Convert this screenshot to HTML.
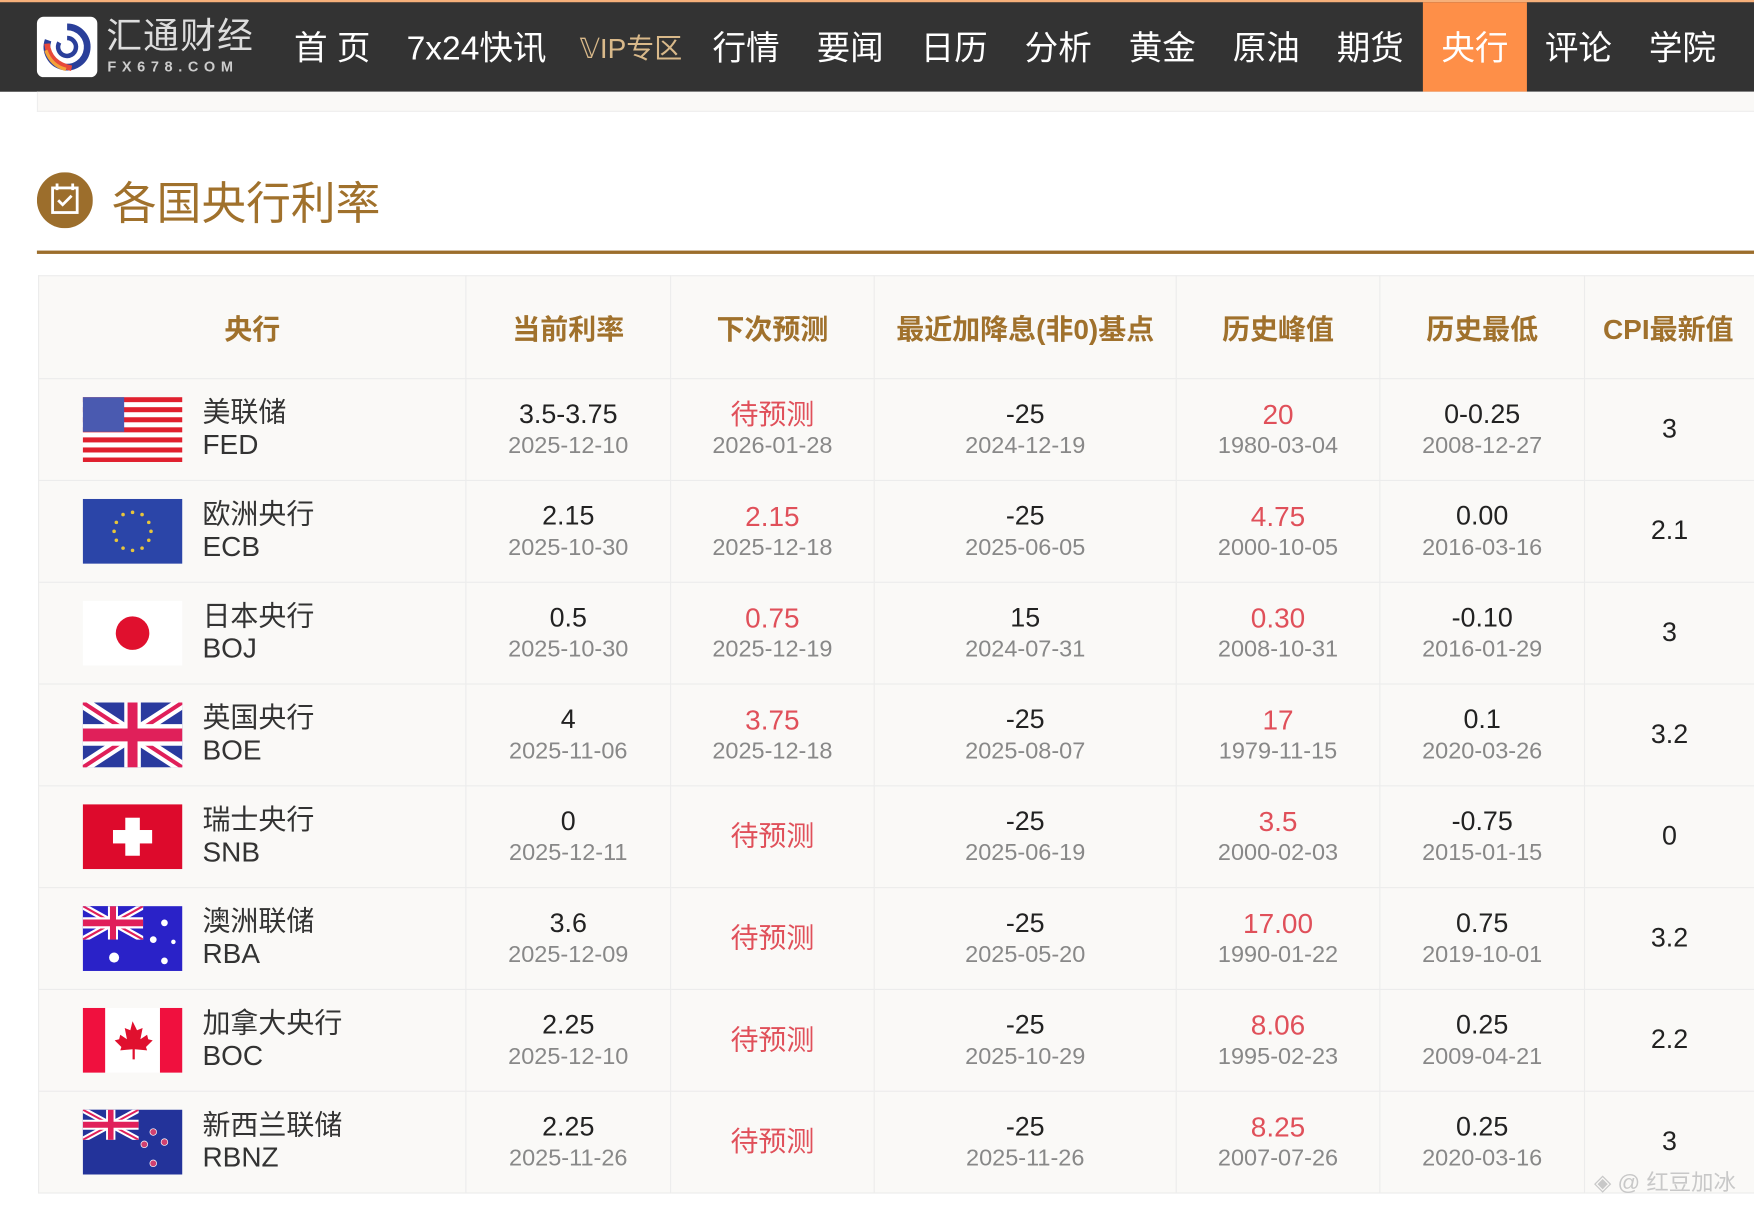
<!DOCTYPE html>
<html><head><meta charset="utf-8">
<style>
html,body{margin:0;padding:0;background:#fff;overflow:hidden;width:1754px;height:1206px}
#w{position:absolute;left:0;top:0;width:1568px;height:1078px;transform:scale(1.11862);transform-origin:0 0;font-family:"Liberation Sans","Noto Sans CJK SC",sans-serif}
.nav{position:absolute;left:0;top:0;width:1568px;height:82px;background:#333;border-top:2px solid #f6b07a;box-sizing:border-box}
.ni{position:absolute;top:2px;height:80px;line-height:80px;color:#fff;font-size:30px;text-align:center;white-space:nowrap}
.sub{position:absolute;left:33px;top:82px;width:1540px;height:17px;background:#faf9f7;border-bottom:1px solid #eee;border-left:1px solid #eee}
.title{position:absolute;left:100px;top:155px;font-size:40px;color:#a0712c;line-height:56px}
.hl{position:absolute;left:33px;top:224px;width:1540px;height:3px;background:#9c6e2c}
table{position:absolute;left:34px;top:246px;border-collapse:collapse;background:#faf9f7;table-layout:fixed;width:1580px}
td,th{border:1px solid #ececec;text-align:center;padding:0;height:90px}
th{color:#a0712c;font-size:25px;font-weight:bold;height:91px}
.v{font-size:24px;color:#222;line-height:28px}
.d{font-size:21px;color:#888;line-height:27px}
.r{color:#e0505a}
td>.r:only-child,.v.r{font-size:25px}
.bk{text-align:left;position:relative}
.bk svg{position:absolute;left:39px;top:16px}
.nm{position:absolute;left:146px;top:16px;font-size:25px;color:#333;line-height:29px}
</style></head><body><div id="w">
<div class="nav">
 <div style="position:absolute;left:33px;top:13px;width:54px;height:54px;background:#fff;border-radius:6px">
  <svg width="54" height="54" viewBox="0 0 54 54"><path d="M27 9a18 18 0 1 1-17 12" fill="none" stroke="#2a3f9a" stroke-width="6"/><path d="M27 19a8 8 0 1 1-7 4" fill="none" stroke="#2a3f9a" stroke-width="4"/><path d="M9 24q2 18 22 22" fill="none" stroke="#e8483a" stroke-width="5"/><path d="M8 30q5 14 18 17" fill="none" stroke="#f3a13a" stroke-width="3"/></svg>
 </div>
 <div style="position:absolute;left:95px;top:12px;color:#ddd;font-size:32px;line-height:36px;letter-spacing:1px">汇通财经</div>
 <div style="position:absolute;left:96px;top:50px;color:#ccc;font-size:13px;letter-spacing:5px;font-weight:bold">FX678.COM</div>
 <div class="ni" style="left:262px;width:70px">首 页</div>
 <div class="ni" style="left:362px;width:128px">7x24快讯</div>
 <div class="ni" style="left:513px;width:102px;color:#d9b98a;font-size:25px">𝕍IP专区</div>
 <div class="ni" style="left:637px;width:60px">行情</div>
 <div class="ni" style="left:730px;width:60px">要闻</div>
 <div class="ni" style="left:823px;width:60px">日历</div>
 <div class="ni" style="left:916px;width:60px">分析</div>
 <div class="ni" style="left:1009px;width:60px">黄金</div>
 <div class="ni" style="left:1102px;width:60px">原油</div>
 <div class="ni" style="left:1195px;width:60px">期货</div>
 <div class="ni" style="left:1272px;width:93px;top:0;height:80px;background:#fe8f48;line-height:84px">央行</div>
 <div class="ni" style="left:1381px;width:60px">评论</div>
 <div class="ni" style="left:1474px;width:60px">学院</div>
</div>
<div class="sub"></div>
<svg style="position:absolute;left:33px;top:154px" width="50" height="50" viewBox="0 0 50 50"><circle cx="25" cy="25" r="25" fill="#9c6e2c"/><rect x="14" y="14" width="22" height="22" fill="none" stroke="#fff" stroke-width="2.5"/><path d="M18 10v6M32 10v6" stroke="#fff" stroke-width="2.5"/><path d="M19 25l4 4 8-8" fill="none" stroke="#fff" stroke-width="2.5"/></svg>
<div class="title">各国央行利率</div>
<div class="hl"></div>
<table>
<colgroup><col style="width:382px"><col style="width:183px"><col style="width:182px"><col style="width:270px"><col style="width:182px"><col style="width:183px"><col style="width:152px"><col></colgroup>
<tr><th>央行</th><th>当前利率</th><th>下次预测</th><th>最近加降息(非0)基点</th><th>历史峰值</th><th>历史最低</th><th style="text-align:left;padding-left:16px">CPI最新值</th><th style="border-right:none"></th></tr>
<tr><td class="bk"><svg width="89" height="58" viewBox="0 0 89 58"><rect width="89" height="58" fill="#fff"/><g fill="#e0202e"><rect y="0" width="89" height="4.5"/><rect y="9" width="89" height="4.5"/><rect y="18" width="89" height="4.5"/><rect y="27" width="89" height="4.5"/><rect y="36" width="89" height="4.5"/><rect y="45" width="89" height="4.5"/><rect y="54" width="89" height="4"/></g><rect width="37" height="31" fill="#4a5ab0"/></svg><div class="nm">美联储<br>FED</div></td>
<td><div class="v">3.5-3.75</div><div class="d">2025-12-10</div></td><td><div class="v r">待预测</div><div class="d">2026-01-28</div></td><td><div class="v">-25</div><div class="d">2024-12-19</div></td><td><div class="v r">20</div><div class="d">1980-03-04</div></td><td><div class="v">0-0.25</div><div class="d">2008-12-27</div></td><td class="v">3</td><td></td></tr>
<tr><td class="bk"><svg width="89" height="58" viewBox="0 0 89 58"><rect width="89" height="58" fill="#2b45a8"/><g fill="#e8c53a"><circle cx="44.5" cy="12" r="1.6"/><circle cx="53" cy="14" r="1.6"/><circle cx="59" cy="21" r="1.6"/><circle cx="61" cy="29" r="1.6"/><circle cx="59" cy="37" r="1.6"/><circle cx="53" cy="44" r="1.6"/><circle cx="44.5" cy="46" r="1.6"/><circle cx="36" cy="44" r="1.6"/><circle cx="30" cy="37" r="1.6"/><circle cx="28" cy="29" r="1.6"/><circle cx="30" cy="21" r="1.6"/><circle cx="36" cy="14" r="1.6"/></g></svg><div class="nm">欧洲央行<br>ECB</div></td>
<td><div class="v">2.15</div><div class="d">2025-10-30</div></td><td><div class="v r">2.15</div><div class="d">2025-12-18</div></td><td><div class="v">-25</div><div class="d">2025-06-05</div></td><td><div class="v r">4.75</div><div class="d">2000-10-05</div></td><td><div class="v">0.00</div><div class="d">2016-03-16</div></td><td class="v">2.1</td><td></td></tr>
<tr><td class="bk"><svg width="89" height="58" viewBox="0 0 89 58"><rect width="89" height="58" fill="#fff"/><circle cx="44.5" cy="29" r="15" fill="#e0102e"/></svg><div class="nm">日本央行<br>BOJ</div></td>
<td><div class="v">0.5</div><div class="d">2025-10-30</div></td><td><div class="v r">0.75</div><div class="d">2025-12-19</div></td><td><div class="v">15</div><div class="d">2024-07-31</div></td><td><div class="v r">0.30</div><div class="d">2008-10-31</div></td><td><div class="v">-0.10</div><div class="d">2016-01-29</div></td><td class="v">3</td><td></td></tr>
<tr><td class="bk"><svg width="89" height="58" viewBox="0 0 60 30" preserveAspectRatio="none"><rect width="60" height="30" fill="#2a3a9e"/><path d="M0,0L60,30M60,0L0,30" stroke="#fff" stroke-width="6"/><path d="M0,0L60,30M60,0L0,30" stroke="#e0205a" stroke-width="2"/><path d="M30,0V30M0,15H60" stroke="#fff" stroke-width="10"/><path d="M30,0V30M0,15H60" stroke="#e0205a" stroke-width="6"/></svg><div class="nm">英国央行<br>BOE</div></td>
<td><div class="v">4</div><div class="d">2025-11-06</div></td><td><div class="v r">3.75</div><div class="d">2025-12-18</div></td><td><div class="v">-25</div><div class="d">2025-08-07</div></td><td><div class="v r">17</div><div class="d">1979-11-15</div></td><td><div class="v">0.1</div><div class="d">2020-03-26</div></td><td class="v">3.2</td><td></td></tr>
<tr><td class="bk"><svg width="89" height="58" viewBox="0 0 89 58"><rect width="89" height="58" fill="#dd0a2c"/><rect x="38" y="12" width="13" height="34" fill="#fff"/><rect x="27" y="23" width="35" height="12" fill="#fff"/></svg><div class="nm">瑞士央行<br>SNB</div></td>
<td><div class="v">0</div><div class="d">2025-12-11</div></td><td><div class="v r">待预测</div></td><td><div class="v">-25</div><div class="d">2025-06-19</div></td><td><div class="v r">3.5</div><div class="d">2000-02-03</div></td><td><div class="v">-0.75</div><div class="d">2015-01-15</div></td><td class="v">0</td><td></td></tr>
<tr><td class="bk"><svg width="89" height="58" viewBox="0 0 89 58"><rect width="89" height="58" fill="#2a22c8"/><svg width="54" height="30" viewBox="0 0 60 30" preserveAspectRatio="none"><rect width="60" height="30" fill="#2a22c8"/><path d="M0,0L60,30M60,0L0,30" stroke="#fff" stroke-width="6"/><path d="M0,0L60,30M60,0L0,30" stroke="#e0205a" stroke-width="2"/><path d="M30,0V30M0,15H60" stroke="#fff" stroke-width="10"/><path d="M30,0V30M0,15H60" stroke="#e0205a" stroke-width="6"/></svg><g fill="#fff"><circle cx="28" cy="46" r="4.5"/><circle cx="73" cy="15" r="3"/><circle cx="63" cy="30" r="3"/><circle cx="81" cy="32" r="2"/><circle cx="73" cy="49" r="3"/></g></svg><div class="nm">澳洲联储<br>RBA</div></td>
<td><div class="v">3.6</div><div class="d">2025-12-09</div></td><td><div class="v r">待预测</div></td><td><div class="v">-25</div><div class="d">2025-05-20</div></td><td><div class="v r">17.00</div><div class="d">1990-01-22</div></td><td><div class="v">0.75</div><div class="d">2019-10-01</div></td><td class="v">3.2</td><td></td></tr>
<tr><td class="bk"><svg width="89" height="58" viewBox="0 0 89 58"><rect width="89" height="58" fill="#fff"/><rect width="20" height="58" fill="#f0103e"/><rect x="69" width="20" height="58" fill="#f0103e"/><path d="M44.5 12l4 8 5-2-2 10 6-4 1 4 4 1-6 6 1 3-11-1v9h-2v-9l-11 1 1-3-6-6 4-1 1-4 6 4-2-10 5 2z" fill="#e0102e"/></svg><div class="nm">加拿大央行<br>BOC</div></td>
<td><div class="v">2.25</div><div class="d">2025-12-10</div></td><td><div class="v r">待预测</div></td><td><div class="v">-25</div><div class="d">2025-10-29</div></td><td><div class="v r">8.06</div><div class="d">1995-02-23</div></td><td><div class="v">0.25</div><div class="d">2009-04-21</div></td><td class="v">2.2</td><td></td></tr>
<tr><td class="bk"><svg width="89" height="58" viewBox="0 0 89 58"><rect width="89" height="58" fill="#23339a"/><svg width="50" height="27" viewBox="0 0 60 30" preserveAspectRatio="none"><rect width="60" height="30" fill="#23339a"/><path d="M0,0L60,30M60,0L0,30" stroke="#fff" stroke-width="6"/><path d="M0,0L60,30M60,0L0,30" stroke="#e0205a" stroke-width="2"/><path d="M30,0V30M0,15H60" stroke="#fff" stroke-width="10"/><path d="M30,0V30M0,15H60" stroke="#e0205a" stroke-width="6"/></svg><g fill="#d04070" stroke="#fff" stroke-width=".6"><circle cx="63" cy="20" r="3"/><circle cx="73" cy="29" r="3"/><circle cx="55" cy="31" r="3"/><circle cx="63" cy="48" r="3"/></g></svg><div class="nm">新西兰联储<br>RBNZ</div></td>
<td><div class="v">2.25</div><div class="d">2025-11-26</div></td><td><div class="v r">待预测</div></td><td><div class="v">-25</div><div class="d">2025-11-26</div></td><td><div class="v r">8.25</div><div class="d">2007-07-26</div></td><td><div class="v">0.25</div><div class="d">2020-03-16</div></td><td class="v">3</td><td></td></tr>
</table>
<div style="position:absolute;left:1425px;top:1041px;font-size:20px;color:#c8c8c8;white-space:nowrap">◈ @ 红豆加冰</div>
</div></body></html>
